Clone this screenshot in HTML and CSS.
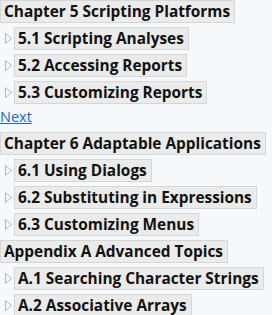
FILE: index.html
```html
<!DOCTYPE html>
<html lang="en">
<head>
    <meta charset="UTF-8">
    <title>Contents</title>
    <link rel="stylesheet" href="styles.css">
</head>
<body>
<div class="toc">
    <div class="chapter"><span class="title">Chapter 5 Scripting Platforms</span></div>
    <div class="item"><svg class="tri" width="7" height="11" viewBox="0 0 7 11"><polygon points="0.5,0.5 6.5,5.5 0.5,10.5"/></svg><span class="title">5.1 Scripting Analyses</span></div>
    <div class="item"><svg class="tri" width="7" height="11" viewBox="0 0 7 11"><polygon points="0.5,0.5 6.5,5.5 0.5,10.5"/></svg><span class="title">5.2 Accessing Reports</span></div>
    <div class="item"><svg class="tri" width="7" height="11" viewBox="0 0 7 11"><polygon points="0.5,0.5 6.5,5.5 0.5,10.5"/></svg><span class="title">5.3 Customizing Reports</span></div>
    <a class="next" href="#">Next</a>
    <div class="chapter"><span class="title">Chapter 6 Adaptable Applications</span></div>
    <div class="item"><svg class="tri" width="7" height="11" viewBox="0 0 7 11"><polygon points="0.5,0.5 6.5,5.5 0.5,10.5"/></svg><span class="title">6.1 Using Dialogs</span></div>
    <div class="item"><svg class="tri" width="7" height="11" viewBox="0 0 7 11"><polygon points="0.5,0.5 6.5,5.5 0.5,10.5"/></svg><span class="title">6.2 Substituting in Expressions</span></div>
    <div class="item"><svg class="tri" width="7" height="11" viewBox="0 0 7 11"><polygon points="0.5,0.5 6.5,5.5 0.5,10.5"/></svg><span class="title">6.3 Customizing Menus</span></div>
    <div class="chapter"><span class="title">Appendix A Advanced Topics</span></div>
    <div class="item"><svg class="tri" width="7" height="11" viewBox="0 0 7 11"><polygon points="0.5,0.5 6.5,5.5 0.5,10.5"/></svg><span class="title">A.1 Searching Character Strings</span></div>
    <div class="item"><svg class="tri" width="7" height="11" viewBox="0 0 7 11"><polygon points="0.5,0.5 6.5,5.5 0.5,10.5"/></svg><span class="title">A.2 Associative Arrays</span></div>
</div>
</body>
</html>
```
FILE: styles.css
```css
body {
    margin: 0;
    background-color: #f5f9fc;
    font-family: "Open Sans", "Noto Sans", sans-serif;
}

.toc {
    display: flex;
    flex-direction: column;
    align-items: flex-start;
}

.chapter, .item {
    display: flex;
    align-items: center;
    margin-bottom: 4px;
}

.item {
    margin-left: 5px;
}

.title {
    display: block;
    background-color: #ebebeb;
    border: 1px solid #d6d6d6;
    font-size: 15.4px;
    font-weight: bold;
    color: #111;
    line-height: 21px;
    padding: 0 4px 0 3px;
    white-space: nowrap;
}

.tri {
    display: block;
    margin-right: 2px;
    fill: none;
    stroke: #b4b4b4;
    stroke-width: 1;
}

.next {
    font-size: 14.5px;
    color: #1a66cc;
    margin: 0 0 6px 0;
    line-height: 18px;
}
```
